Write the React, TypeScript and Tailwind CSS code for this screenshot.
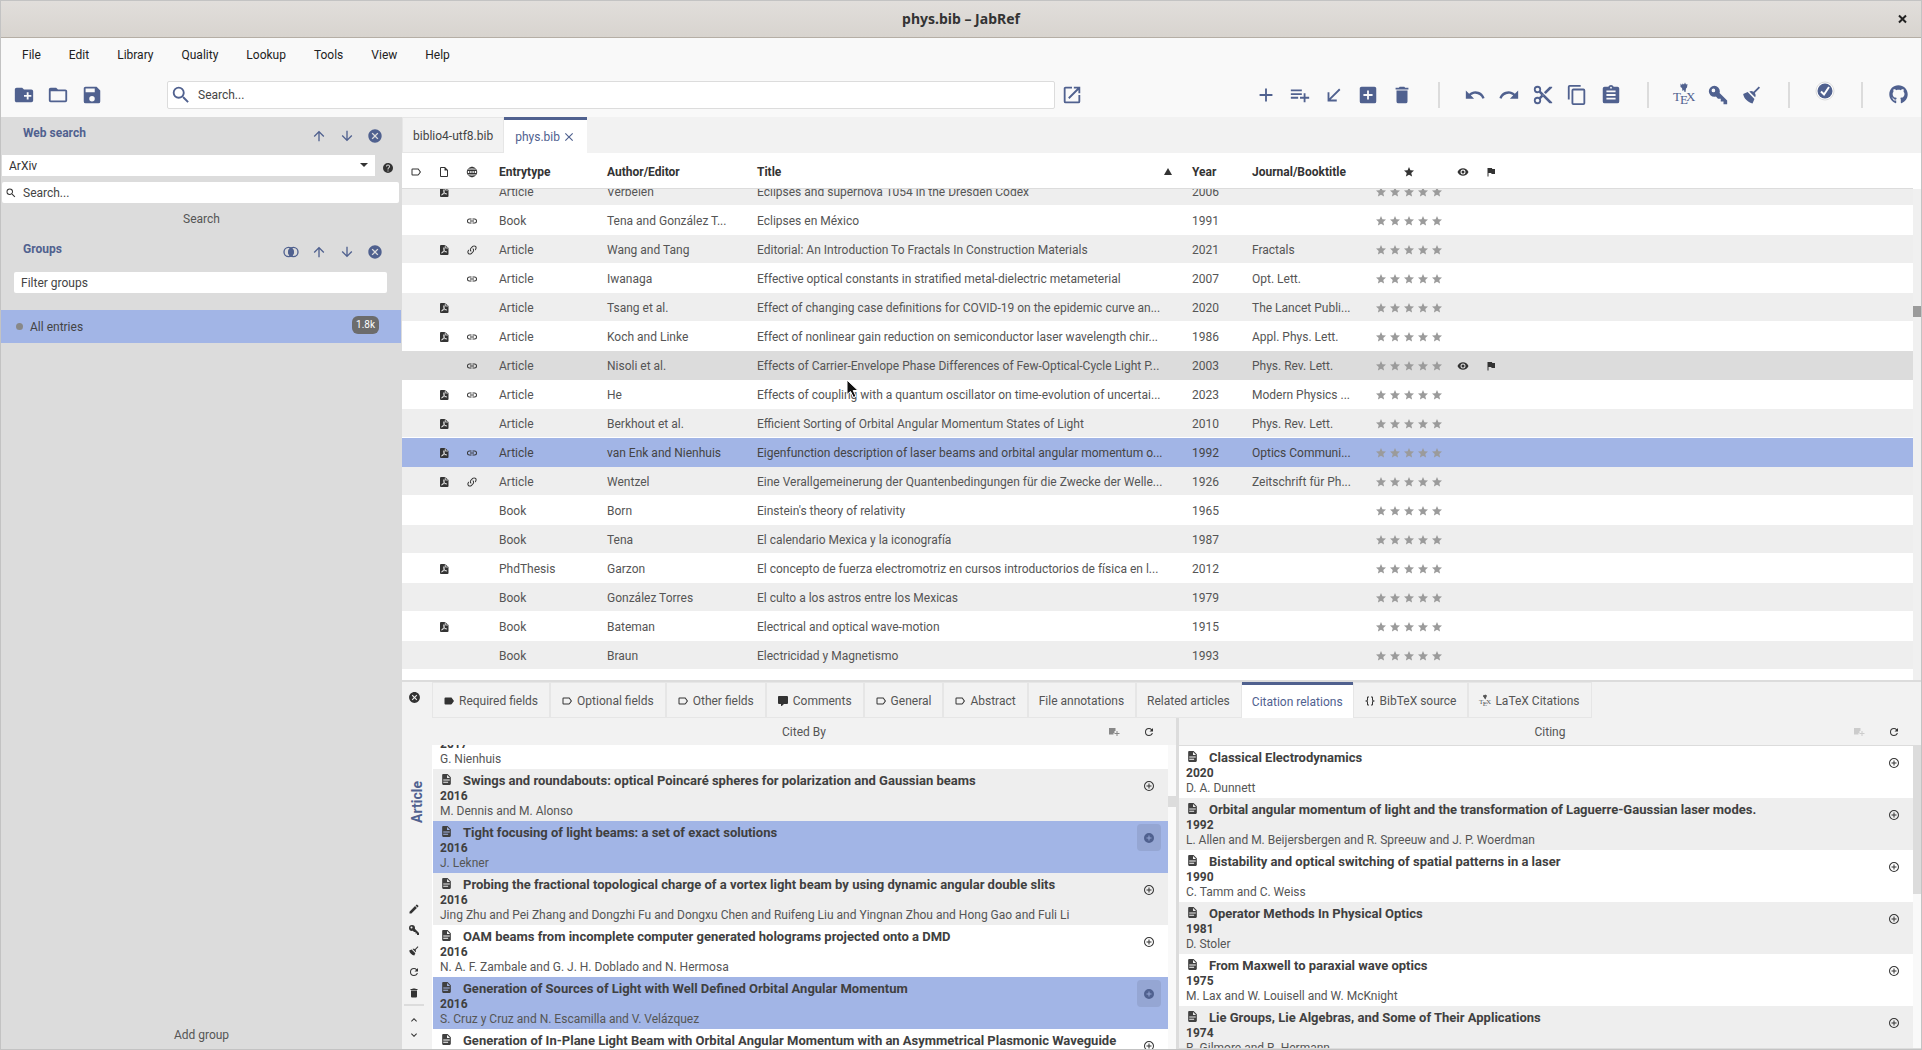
import React, { useEffect, useRef, useState } from 'react';
import clsx from 'clsx';
import { FaGithub } from 'react-icons/fa';

const ICONS = {
  folderPlus: 'M10,4L12,6H20A2,2 0 0,1 22,8V18A2,2 0 0,1 20,20H4C2.89,20 2,19.1 2,18V6C2,4.89 2.89,4 4,4H10M15,9V12H12V14H15V17H17V14H20V12H17V9H15Z',
  folder: 'M20,18H4V8H20M20,6H12L10,4H4C2.89,4 2,4.89 2,6V18A2,2 0 0,0 4,20H20A2,2 0 0,0 22,18V8C22,6.89 21.1,6 20,6Z',
  save: 'M15,9H5V5H15M12,19A3,3 0 0,1 9,16A3,3 0 0,1 12,13A3,3 0 0,1 15,16A3,3 0 0,1 12,19M17,3H5C3.89,3 3,3.9 3,5V19A2,2 0 0,0 5,21H19A2,2 0 0,0 21,19V7L17,3Z',
  magnify: 'M9.5,3A6.5,6.5 0 0,1 16,9.5C16,11.11 15.41,12.59 14.44,13.73L14.71,14H15.5L20.5,19L19,20.5L14,15.5V14.71L13.73,14.44C12.59,15.41 11.11,16 9.5,16A6.5,6.5 0 0,1 3,9.5A6.5,6.5 0 0,1 9.5,3M9.5,5C7,5 5,7 5,9.5C5,12 7,14 9.5,14C12,14 14,12 14,9.5C14,7 12,5 9.5,5Z',
  openNew: 'M14,3V5H17.59L7.76,14.83L9.17,16.24L19,6.41V10H21V3M19,19H5V5H12V3H5C3.89,3 3,3.9 3,5V19A2,2 0 0,0 5,21H19A2,2 0 0,0 21,19V12H19V19Z',
  plus: 'M19,13H13V19H11V13H5V11H11V5H13V11H19V13Z',
  playlistPlus: 'M2,16H10V14H2M18,14V10H16V14H12V16H16V20H18V16H22V14M14,6H2V8H14M14,10H2V12H14V10Z',
  importArrow: 'M19,6.41L17.59,5L7,15.59V9H5V19H15V17H8.41L19,6.41Z',
  plusBox: 'M17,13H13V17H11V13H7V11H11V7H13V11H17M19,3H5C3.89,3 3,3.89 3,5V19A2,2 0 0,0 5,21H19A2,2 0 0,0 21,19V5C21,3.89 20.1,3 19,3Z',
  trash: 'M19,4H15.5L14.5,3H9.5L8.5,4H5V6H19M6,19A2,2 0 0,0 8,21H16A2,2 0 0,0 18,19V7H6V19Z',
  undo: 'M12.5,8C9.85,8 7.45,9 5.6,10.6L2,7V16H11L7.38,12.38C8.77,11.22 10.54,10.5 12.5,10.5C16.04,10.5 19.05,12.81 20.1,16L22.47,15.22C21.08,11.03 17.15,8 12.5,8Z',
  redo: 'M18.4,10.6C16.55,9 14.15,8 11.5,8C6.85,8 2.92,11.03 1.54,15.22L3.9,16C4.95,12.81 7.95,10.5 11.5,10.5C13.45,10.5 15.23,11.22 16.62,12.38L13,16H22V7L18.4,10.6Z',
  cut: 'M19,3L13,9L15,11L22,4V3M12,12.5A0.5,0.5 0 0,1 11.5,12A0.5,0.5 0 0,1 12,11.5A0.5,0.5 0 0,1 12.5,12A0.5,0.5 0 0,1 12,12.5M6,20A2,2 0 0,1 4,18C4,16.89 4.9,16 6,16A2,2 0 0,1 8,18C8,19.11 7.1,20 6,20M6,8A2,2 0 0,1 4,6C4,4.89 4.9,4 6,4A2,2 0 0,1 8,6C8,7.11 7.1,8 6,8M9.64,7.64C9.87,7.14 10,6.59 10,6A4,4 0 0,0 6,2A4,4 0 0,0 2,6A4,4 0 0,0 6,10C6.59,10 7.14,9.87 7.64,9.64L10,12L7.64,14.36C7.14,14.13 6.59,14 6,14A4,4 0 0,0 2,18A4,4 0 0,0 6,22A4,4 0 0,0 10,18C10,17.41 9.87,16.86 9.64,16.36L12,14L19,21H22V20L9.64,7.64Z',
  copy: 'M19,21H8V7H19M19,5H8A2,2 0 0,0 6,7V21A2,2 0 0,0 8,23H19A2,2 0 0,0 21,21V7A2,2 0 0,0 19,5M16,1H4A2,2 0 0,0 2,3V17H4V3H16V1Z',
  paste: 'M17,9H7V7H17M17,13H7V11H17M17,17H7V15H17M12,3A1,1 0 0,1 13,4A1,1 0 0,1 12,5A1,1 0 0,1 11,4A1,1 0 0,1 12,3M19,3H14.82C14.4,1.84 13.3,1 12,1C10.7,1 9.6,1.84 9.18,3H5A2,2 0 0,0 3,5V19A2,2 0 0,0 5,21H19A2,2 0 0,0 21,19V5A2,2 0 0,0 19,3Z',
  key: 'M22,18V22H18V19H15V16H12L9.74,13.74C9.19,13.91 8.61,14 8,14A6,6 0 0,1 2,8A6,6 0 0,1 8,2A6,6 0 0,1 14,8C14,8.61 13.91,9.19 13.74,9.74L22,18M7,5A2,2 0 0,0 5,7A2,2 0 0,0 7,9A2,2 0 0,0 9,7A2,2 0 0,0 7,5Z',
  broom: 'M19.36,2.72L20.78,4.14L15.06,9.85C16.13,11.39 16.28,13.24 15.38,14.44L9.06,8.12C10.26,7.22 12.11,7.37 13.65,8.44L19.36,2.72M5.93,17.57C3.92,15.56 2.69,13.16 2.35,10.92L7.23,8.83L14.67,16.27L12.58,21.15C10.34,20.81 7.94,19.58 5.93,17.57Z',
  arrowUp: 'M13,20H11V8L5.5,13.5L4.08,12.08L12,4.16L19.92,12.08L18.5,13.5L13,8V20Z',
  arrowDown: 'M11,4H13V16L18.5,10.5L19.92,11.92L12,19.84L4.08,11.92L5.5,10.5L11,16V4Z',
  closeCircle: 'M12,2C17.53,2 22,6.47 22,12C22,17.53 17.53,22 12,22C6.47,22 2,17.53 2,12C2,6.47 6.47,2 12,2M15.59,7L12,10.59L8.41,7L7,8.41L10.59,12L7,15.59L8.41,17L12,13.41L15.59,17L17,15.59L13.41,12L17,8.41L15.59,7Z',
  close: 'M19,6.41L17.59,5L12,10.59L6.41,5L5,6.41L10.59,12L5,17.59L6.41,19L12,13.41L17.59,19L19,17.59L13.41,12L19,6.41Z',
  help: 'M15.07,11.25L14.17,12.17C13.45,12.89 13,13.5 13,15H11V14.5C11,13.39 11.45,12.39 12.17,11.67L13.41,10.41C13.78,10.05 14,9.55 14,9C14,7.89 13.1,7 12,7A2,2 0 0,0 10,9H8A4,4 0 0,1 12,5A4,4 0 0,1 16,9C16,9.88 15.64,10.67 15.07,11.25M13,19H11V17H13M12,2A10,10 0 0,0 2,12A10,10 0 0,0 12,22A10,10 0 0,0 22,12C22,6.47 17.5,2 12,2Z',
  link: 'M3.9,12C3.9,10.29 5.29,8.9 7,8.9H11V7H7A5,5 0 0,0 2,12A5,5 0 0,0 7,17H11V15.1H7C5.29,15.1 3.9,13.71 3.9,12M8,13H16V11H8V13M17,7H13V8.9H17C18.71,8.9 20.1,10.29 20.1,12C20.1,13.71 18.71,15.1 17,15.1H13V17H17A5,5 0 0,0 22,12A5,5 0 0,0 17,7Z',
  linkVariant: 'M10.59,13.41C11,13.8 11,14.44 10.59,14.83C10.2,15.22 9.56,15.22 9.17,14.83C7.22,12.88 7.22,9.71 9.17,7.76V7.76L12.71,4.22C14.66,2.27 17.83,2.27 19.78,4.22C21.73,6.17 21.73,9.34 19.78,11.29L18.29,12.78C18.3,11.96 18.17,11.14 17.89,10.36L18.36,9.88C19.54,8.71 19.54,6.81 18.36,5.64C17.19,4.46 15.29,4.46 14.12,5.64L10.59,9.17C9.41,10.34 9.41,12.24 10.59,13.41M13.41,9.17C13.8,8.78 14.44,8.78 14.83,9.17C16.78,11.12 16.78,14.29 14.83,16.24V16.24L11.29,19.78C9.34,21.73 6.17,21.73 4.22,19.78C2.27,17.83 2.27,14.66 4.22,12.71L5.71,11.22C5.7,12.04 5.83,12.86 6.11,13.65L5.64,14.12C4.46,15.29 4.46,17.19 5.64,18.36C6.81,19.54 8.71,19.54 9.88,18.36L13.41,14.83C14.59,13.66 14.59,11.76 13.41,10.59C13,10.2 13,9.56 13.41,9.17Z',
  labelOutline: 'M16,17H5V7H16L19.55,12M17.63,5.84C17.27,5.33 16.67,5 16,5H5A2,2 0 0,0 3,7V17A2,2 0 0,0 5,19H16C16.67,19 17.27,18.66 17.63,18.15L22,12L17.63,5.84Z',
  label: 'M17.63,5.84C17.27,5.33 16.67,5 16,5H5A2,2 0 0,0 3,7V17A2,2 0 0,0 5,19H16C16.67,19 17.27,18.66 17.63,18.15L22,12L17.63,5.84Z',
  file: 'M14,2H6A2,2 0 0,0 4,4V20A2,2 0 0,0 6,22H18A2,2 0 0,0 20,20V8L14,2M18,20H6V4H13V9H18V20Z',
  fileText: 'M13,9H18.5L13,3.5V9M6,2H14L20,8V20A2,2 0 0,1 18,22H6C4.89,22 4,21.1 4,20V4C4,2.89 4.89,2 6,2M15,18V16H6V18H15M18,14V12H6V14H18Z',
  star: 'M12,17.27L18.18,21L16.54,13.97L22,9.24L14.81,8.62L12,2L9.19,8.62L2,9.24L7.45,13.97L5.82,21L12,17.27Z',
  eye: 'M12,9A3,3 0 0,1 15,12A3,3 0 0,1 12,15A3,3 0 0,1 9,12A3,3 0 0,1 12,9M12,4.5C17,4.5 21.27,7.61 23,12C21.27,16.39 17,19.5 12,19.5C7,19.5 2.73,16.39 1,12C2.73,7.61 7,4.5 12,4.5M12,7A5,5 0 0,0 7,12A5,5 0 0,0 12,17A5,5 0 0,0 17,12A5,5 0 0,0 12,7Z',
  flag: 'M14.4,6L14,4H5V21H7V14H12.6L13,16H20V6H14.4Z',
  pencil: 'M20.71,7.04C21.1,6.65 21.1,6 20.71,5.63L18.37,3.29C18,2.9 17.35,2.9 16.96,3.29L15.12,5.12L18.87,8.87M3,17.25V21H6.75L17.81,9.93L14.06,6.18L3,17.25Z',
  refresh: 'M17.65,6.35C16.2,4.9 14.21,4 12,4A8,8 0 0,0 4,12A8,8 0 0,0 12,20C15.73,20 18.84,17.45 19.73,14H17.65C16.83,16.33 14.61,18 12,18A6,6 0 0,1 6,12A6,6 0 0,1 12,6C13.66,6 15.14,6.69 16.22,7.78L13,11H20V4L17.65,6.35Z',
  comment: 'M9,22A1,1 0 0,1 8,21V18H4A2,2 0 0,1 2,16V4C2,2.89 2.9,2 4,2H20A2,2 0 0,1 22,4V16A2,2 0 0,1 20,18H13.9L10.2,21.71C10,21.9 9.75,22 9.5,22H9Z',
  chevronUp: 'M7.41,15.41L12,10.83L16.59,15.41L18,14L12,8L6,14L7.41,15.41Z',
  chevronDown: 'M7.41,8.58L12,13.17L16.59,8.58L18,10L12,16L6,10L7.41,8.58Z',
  braces: 'M8,3A2,2 0 0,0 6,5V9A2,2 0 0,1 4,11H3V13H4A2,2 0 0,1 6,15V19A2,2 0 0,0 8,21H10V19H8V14A2,2 0 0,0 6,12A2,2 0 0,0 8,10V5H10V3M16,3A2,2 0 0,1 18,5V9A2,2 0 0,0 20,11H21V13H20A2,2 0 0,0 18,15V19A2,2 0 0,1 16,21H14V19H16V14A2,2 0 0,1 18,12A2,2 0 0,1 16,10V5H14V3H16Z',
  plusCircleOutline: 'M12,20C7.59,20 4,16.41 4,12C4,7.59 7.59,4 12,4C16.41,4 20,7.59 20,12C20,16.41 16.41,20 12,20M12,2A10,10 0 0,0 2,12A10,10 0 0,0 12,22A10,10 0 0,0 22,12A10,10 0 0,0 12,2M13,7H11V11H7V13H11V17H13V13H17V11H13V7Z',
  plusCircle: 'M17,13H13V17H11V13H7V11H11V7H13V11H17M12,2A10,10 0 0,0 2,12A10,10 0 0,0 12,22A10,10 0 0,0 22,12A10,10 0 0,0 12,2Z',
  addSelected: 'M2,4H15V10H13V14H11V17H2V4M17,10H19V14H23V16H19V20H17V16H13V14H17V10Z',
};

type IconName = keyof typeof ICONS;

function Icon({ name, size = 12, className }: { name: IconName; size?: number; className?: string }) {
  return (
    <svg width={size} height={size} viewBox="0 0 24 24" fill="currentColor" fillRule="evenodd" className={clsx('shrink-0', className)} aria-hidden="true">
      <path d={ICONS[name]} />
    </svg>
  );
}

function PdfIcon() {
  return (
    <svg width="12" height="12" viewBox="0 0 24 24" className="inline-block align-middle" aria-hidden="true">
      <path fill="currentColor" d="M6,2H14L21,8V20A2,2 0 0,1 19,22H6A2,2 0 0,1 4,20V4A2,2 0 0,1 6,2Z" />
      <path fill="none" stroke="#eee" strokeWidth="1.6" d="M11.5,7.5C13.5,7 12.5,11 11,14C9.5,17 7.5,19 7,18C6.5,16.5 12,14.5 17,15.5C19,16.5 14,16.5 11.5,10.5C11,9 11,8 11.5,7.5M14.5,3V8H20" />
    </svg>
  );
}

function GlobeIcon() {
  return (
    <svg width="12" height="12" viewBox="0 0 24 24" fill="none" stroke="currentColor" strokeWidth="2" className="inline-block" aria-hidden="true">
      <circle cx="12" cy="12" r="9.5" />
      <ellipse cx="12" cy="12" rx="4.5" ry="9.5" />
      <path d="M12,2V22M3,9H21M3,15H21" />
    </svg>
  );
}

function TexIcon({ size = 22 }: { size?: number }) {
  return (
    <svg width={size} height={size} viewBox="0 0 22 22" fill="currentColor" className="shrink-0 overflow-visible" aria-hidden="true">
      <path d="M7.5,-0.5L9,1L9.5,-0.5L11,0.5L12,-1.5L13,0.5L14.5,0L14,3.5L13,4.5L12.5,8H11.5L11,6L9.5,7L9,4L7.5,3Z" />
      <g fontFamily="Liberation Serif, serif" fontSize="13">
        <text x="0" y="17">T</text>
        <text x="7" y="20">E</text>
        <text x="13" y="17">X</text>
      </g>
    </svg>
  );
}

// Two overlapping rings, the shared part is filled
function UnionIcon() {
  return (
    <svg width="16" height="16" viewBox="0 0 24 24" fill="none" stroke="currentColor" strokeWidth="2" aria-hidden="true">
      <circle cx="8.5" cy="12" r="7" />
      <circle cx="15.5" cy="12" r="7" />
      <path fill="currentColor" d="M12,6A7,7 0 0,1 12,18A7,7 0 0,1 12,6Z" />
    </svg>
  );
}

function CheckBadge() {
  return (
    <svg width="20" height="20" viewBox="0 0 20 20" aria-hidden="true">
      <circle cx="10" cy="10" r="9" fill="#fff" stroke="#dcdcdc" />
      <circle cx="10" cy="10" r="7.5" fill="#50618f" />
      <path d="M6,10.5L9,13.5L14,6" fill="none" stroke="#fff" strokeWidth="2" />
    </svg>
  );
}

function ToolButton({ icon, label }: { icon: IconName; label: string }) {
  return (
    <button aria-label={label} className="flex h-7 w-[34px] items-center justify-center">
      <Icon name={icon} size={22} />
    </button>
  );
}

const Divider = () => (
  <div className="flex w-[39px] justify-center">
    <div className="h-[26px] w-0.5 bg-[#dcdcdc]" />
  </div>
);

const MENU = ['File', 'Edit', 'Library', 'Quality', 'Lookup', 'Tools', 'View', 'Help'];

type Entry = { pdf?: boolean; link?: 'link' | 'linkVariant'; type: string; author: string; title: string; year: string; journal?: string; marked?: boolean };

const ENTRIES: Entry[] = [
  { pdf: true, type: 'Article', author: 'Verbelen', title: 'Eclipses and supernova 1054 in the Dresden Codex', year: '2006' },
  { link: 'link', type: 'Book', author: 'Tena and González T...', title: 'Eclipses en México', year: '1991' },
  { pdf: true, link: 'linkVariant', type: 'Article', author: 'Wang and Tang', title: 'Editorial: An Introduction To Fractals In Construction Materials', year: '2021', journal: 'Fractals' },
  { link: 'link', type: 'Article', author: 'Iwanaga', title: 'Effective optical constants in stratified metal-dielectric metameterial', year: '2007', journal: 'Opt. Lett.' },
  { pdf: true, type: 'Article', author: 'Tsang et al.', title: 'Effect of changing case definitions for COVID-19 on the epidemic curve an...', year: '2020', journal: 'The Lancet Publi...' },
  { pdf: true, link: 'link', type: 'Article', author: 'Koch and Linke', title: 'Effect of nonlinear gain reduction on semiconductor laser wavelength chir...', year: '1986', journal: 'Appl. Phys. Lett.' },
  { link: 'link', type: 'Article', author: 'Nisoli et al.', title: 'Effects of Carrier-Envelope Phase Differences of Few-Optical-Cycle Light P...', year: '2003', journal: 'Phys. Rev. Lett.', marked: true },
  { pdf: true, link: 'link', type: 'Article', author: 'He', title: 'Effects of coupling with a quantum oscillator on time-evolution of uncertai...', year: '2023', journal: 'Modern Physics ...' },
  { pdf: true, type: 'Article', author: 'Berkhout et al.', title: 'Efficient Sorting of Orbital Angular Momentum States of Light', year: '2010', journal: 'Phys. Rev. Lett.' },
  { pdf: true, link: 'link', type: 'Article', author: 'van Enk and Nienhuis', title: 'Eigenfunction description of laser beams and orbital angular momentum o...', year: '1992', journal: 'Optics Communi...' },
  { pdf: true, link: 'linkVariant', type: 'Article', author: 'Wentzel', title: 'Eine Verallgemeinerung der Quantenbedingungen für die Zwecke der Welle...', year: '1926', journal: 'Zeitschrift für Ph...' },
  { type: 'Book', author: 'Born', title: "Einstein's theory of relativity", year: '1965' },
  { type: 'Book', author: 'Tena', title: 'El calendario Mexica y la iconografía', year: '1987' },
  { pdf: true, type: 'PhdThesis', author: 'Garzon', title: 'El concepto de fuerza electromotriz en cursos introductorios de física en l...', year: '2012' },
  { type: 'Book', author: 'González Torres', title: 'El culto a los astros entre los Mexicas', year: '1979' },
  { pdf: true, type: 'Book', author: 'Bateman', title: 'Electrical and optical wave-motion', year: '1915' },
  { type: 'Book', author: 'Braun', title: 'Electricidad y Magnetismo', year: '1993' },
  { type: '', author: '', title: '', year: '' },
];

type Relation = { title: string; year: string; authors: string };

const CITED_BY: Relation[] = [
  { title: '', year: '2017', authors: 'G. Nienhuis' },
  { title: 'Swings and roundabouts: optical Poincaré spheres for polarization and Gaussian beams', year: '2016', authors: 'M. Dennis and M. Alonso' },
  { title: 'Tight focusing of light beams: a set of exact solutions', year: '2016', authors: 'J. Lekner' },
  { title: 'Probing the fractional topological charge of a vortex light beam by using dynamic angular double slits', year: '2016', authors: 'Jing Zhu and Pei Zhang and Dongzhi Fu and Dongxu Chen and Ruifeng Liu and Yingnan Zhou and Hong Gao and Fuli Li' },
  { title: 'OAM beams from incomplete computer generated holograms projected onto a DMD', year: '2016', authors: 'N. A. F. Zambale and G. J. H. Doblado and N. Hermosa' },
  { title: 'Generation of Sources of Light with Well Defined Orbital Angular Momentum', year: '2016', authors: 'S. Cruz y Cruz and N. Escamilla and V. Velázquez' },
  { title: 'Generation of In-Plane Light Beam with Orbital Angular Momentum with an Asymmetrical Plasmonic Waveguide', year: '', authors: '' },
];

const CITING: Relation[] = [
  { title: 'Classical Electrodynamics', year: '2020', authors: 'D. A. Dunnett' },
  { title: 'Orbital angular momentum of light and the transformation of Laguerre-Gaussian laser modes.', year: '1992', authors: 'L. Allen and M. Beijersbergen and R. Spreeuw and J. P. Woerdman' },
  { title: 'Bistability and optical switching of spatial patterns in a laser', year: '1990', authors: 'C. Tamm and C. Weiss' },
  { title: 'Operator Methods In Physical Optics', year: '1981', authors: 'D. Stoler' },
  { title: 'From Maxwell to paraxial wave optics', year: '1975', authors: 'M. Lax and W. Louisell and W. McKnight' },
  { title: 'Lie Groups, Lie Algebras, and Some of Their Applications', year: '1974', authors: 'R. Gilmore and R. Hermann' },
];

const EDITOR_TABS: { name: string; icon?: IconName | 'tex' }[] = [
  { name: 'Required fields', icon: 'label' },
  { name: 'Optional fields', icon: 'labelOutline' },
  { name: 'Other fields', icon: 'labelOutline' },
  { name: 'Comments', icon: 'comment' },
  { name: 'General', icon: 'labelOutline' },
  { name: 'Abstract', icon: 'labelOutline' },
  { name: 'File annotations' },
  { name: 'Related articles' },
  { name: 'Citation relations' },
  { name: 'BibTeX source', icon: 'braces' },
  { name: 'LaTeX Citations', icon: 'tex' },
];

// Scroll area that opens at a given position
function Scroller({ top = 0, children }: { top?: number; children: React.ReactNode }) {
  const ref = useRef<HTMLDivElement>(null);
  useEffect(() => {
    if (ref.current) ref.current.scrollTop = top;
  }, [top]);
  return (
    <div ref={ref} className="min-w-0 flex-1 overflow-hidden">
      {children}
    </div>
  );
}

function PaneHeader({ title, union, className }: { title: string; union?: boolean; className?: string }) {
  return (
    <div className={clsx('flex items-start justify-between pr-[19px] pl-[22px]', className)}>
      <h2 className="text-xs font-bold text-[#50618f]">{title}</h2>
      <div className="flex gap-3 pt-[3px] text-[#50618f]">
        {union && <button aria-label="Toggle intersection"><UnionIcon /></button>}
        <button aria-label="Move up"><Icon name="arrowUp" size={16} /></button>
        <button aria-label="Move down"><Icon name="arrowDown" size={16} /></button>
        <button aria-label={`Close ${title}`}><Icon name="closeCircle" size={16} /></button>
      </div>
    </div>
  );
}

function Sidebar() {
  return (
    <aside className="flex w-[401px] shrink-0 flex-col bg-[#dcdcdc]">
      <PaneHeader title="Web search" className="pt-2" />
      <div className="mt-[11px] flex h-[21px] items-center pl-px">
        <div className="relative w-[373px]">
          <select aria-label="Search provider" className="block h-[21px] w-full appearance-none bg-white px-[7px] text-xs text-[#333]">
            <option>ArXiv</option>
          </select>
          <svg width="8" height="4" viewBox="0 0 8 4" className="absolute top-2 right-[7px]" aria-hidden="true">
            <path d="M0,0H8L4,4Z" fill="#333" />
          </svg>
        </div>
        <button aria-label="Help" className="mt-1 ml-[7px] text-[#333]"><Icon name="help" /></button>
      </div>
      <label className="mx-px mt-1.5 mr-[3px] flex h-[21px] items-center gap-1.5 rounded-xs bg-white pl-[3px] text-[#333]">
        <Icon name="magnify" />
        <input aria-label="Web search query" placeholder="Search..." className="min-w-0 flex-1 text-xs outline-none placeholder:text-[#444]" />
      </label>
      <button className="mt-0.5 h-7 text-xs text-[#555]">Search</button>
      <PaneHeader title="Groups" union className="pt-2" />
      <input aria-label="Filter groups" placeholder="Filter groups" className="mr-[15px] ml-[13px] mt-3 h-[21px] rounded-xs bg-white px-[7px] text-xs outline-none placeholder:text-[#444]" />
      <ul className="mt-[17px] flex-1">
        <li className="mr-px flex h-[33px] items-center bg-[#a2b5e6] pl-[15px] text-xs text-[#444]">
          <span className="h-[7px] w-[7px] rounded-full bg-[#888]" />
          <span className="ml-[7px] flex-1">All entries</span>
          <span className="mr-[22px] mb-1 rounded-md bg-[#6c6c6c] px-1 py-0.5 text-[10px] leading-[14px] text-white">1.8k</span>
        </li>
      </ul>
      <button className="h-7 text-xs text-[#555]">Add group</button>
    </aside>
  );
}

function EntryTable() {
  const [selected] = useState(9);
  return (
    <div className="flex min-h-0 flex-[527] basis-0 bg-white">
      <Scroller top={12}>
        <table className="w-full table-fixed border-separate border-spacing-0 text-left text-xs text-[#555]">
          <colgroup>
            <col className="w-7" />
            <col className="w-7" />
            <col className="w-7" />
            <col className="w-[108px]" />
            <col className="w-[150px]" />
            <col className="w-[435px]" />
            <col className="w-[60px]" />
            <col className="w-[133px]" />
            <col className="w-[77px]" />
            <col className="w-7" />
            <col className="w-7" />
            <col />
          </colgroup>
          <thead className="sticky top-0 z-10 bg-white text-[#333]">
            <tr className="h-9 *:border-b *:border-[#dcdcdc] *:pt-0.5">
              <th className="text-center"><Icon name="labelOutline" className="inline-block" /></th>
              <th className="text-center"><Icon name="file" className="inline-block" /></th>
              <th className="text-center"><GlobeIcon /></th>
              <th className="px-[13px]">Entrytype</th>
              <th className="px-[13px]">Author/Editor</th>
              <th className="pr-[7px] pl-[13px]">
                <div className="flex items-center justify-between">
                  Title
                  <svg width="8" height="7" viewBox="0 0 8 7" aria-hidden="true"><path d="M4,0L8,7H0Z" fill="currentColor" /></svg>
                </div>
              </th>
              <th className="px-[13px]">Year</th>
              <th className="px-[13px]">Journal/Booktitle</th>
              <th className="pr-1 text-center"><Icon name="star" className="inline-block" /></th>
              <th className="text-center"><Icon name="eye" className="inline-block" /></th>
              <th className="text-center"><Icon name="flag" className="inline-block" /></th>
              <th></th>
            </tr>
          </thead>
          <tbody>
            {ENTRIES.map((e, i) => (
              <tr
                key={i}
                className={clsx(
                  'h-[29px] *:whitespace-nowrap *:overflow-hidden',
                  i === selected && 'bg-[#a2b5e6] text-[#444]',
                  i !== selected && e.marked && 'bg-[#dcdcdc]',
                  i !== selected && !e.marked && i % 2 === 0 && 'bg-[#eee] *:shadow-[inset_0_-1px_#fff]',
                )}
              >
                <td></td>
                <td className="text-center leading-3 text-[#333]">{e.pdf && <PdfIcon />}</td>
                <td className="text-center leading-3 text-[#333]">{e.link && <Icon name={e.link} className="inline-block" />}</td>
                <td className="px-[13px]">{e.type}</td>
                <td className="px-[13px]">{e.author}</td>
                <td className="px-[13px]">{e.title}</td>
                <td className="px-[13px]">{e.year}</td>
                <td className="px-[13px]">{e.journal}</td>
                <td>
                  <div className="flex gap-0.5 pl-[3px] text-[#9b9b9b]">
                    {[1, 2, 3, 4, 5].map((n) => <Icon key={n} name="star" />)}
                  </div>
                </td>
                <td className="text-center leading-3 text-[#333]">{e.marked && <Icon name="eye" className="inline-block" />}</td>
                <td className="text-center leading-3 text-[#333]">{e.marked && <Icon name="flag" className="inline-block" />}</td>
                <td></td>
              </tr>
            ))}
          </tbody>
        </table>
      </Scroller>
      <div className="mt-9 w-2 bg-[#f0f0f0] pt-[117px]">
        <div className="h-[11px] bg-[#9b9b9b]" />
      </div>
    </div>
  );
}

function RelationRow({ item, shaded, selected }: { item: Relation; shaded?: boolean; selected?: boolean }) {
  return (
    <li className={clsx('flex h-[52px] items-start pl-[7px]', selected ? 'bg-[#a2b5e6]' : shaded && 'bg-[#eee]')}>
      <div className="min-w-0 flex-1 pt-1 text-xs leading-[15px] whitespace-nowrap text-[#555]">
        <div className="flex h-4 text-[13px] leading-[15px] font-bold text-[#404040]">
          <Icon name="fileText" size={13} />
          <span className="ml-2.5">{item.title}</span>
        </div>
        <div className="h-[15px] font-bold text-[#404040]">{item.year}</div>
        <div className="h-[15px]">{item.authors}</div>
      </div>
      <button
        aria-label={`Add ${item.title}`}
        className={clsx('mt-[3px] mr-[7px] flex h-[27px] w-6 items-center justify-center rounded', selected ? 'bg-[#95a6d3] text-[#50618f]' : 'text-[#333]')}
      >
        <Icon name={selected ? 'plusCircle' : 'plusCircleOutline'} />
      </button>
    </li>
  );
}

function RelationHeader({ title, disabled }: { title: string; disabled?: boolean }) {
  return (
    <div className="grid h-[27px] shrink-0 grid-cols-[1fr_auto_1fr] items-center text-xs text-[#555]">
      <span />
      <h3>{title}</h3>
      <div className="flex justify-end gap-[23px] pr-[21px]">
        <button aria-label={`Import selected of ${title}`} disabled={disabled} className={disabled ? 'text-[#ccc]' : 'text-[#888]'}>
          <Icon name="addSelected" />
        </button>
        <button aria-label={`Reload ${title}`} className="text-[#333]"><Icon name="refresh" /></button>
      </div>
    </div>
  );
}

function EntryEditor() {
  const [tab, setTab] = useState('Citation relations');
  return (
    <section className="flex min-h-0 flex-[367] basis-0 bg-[#f2f2f2] text-[#333]">
      <div className="flex w-[30px] shrink-0 flex-col items-center pt-[9px] pr-1.5 pb-2">
        <button aria-label="Close editor"><Icon name="closeCircle" size={13} /></button>
        <div className="flex flex-1 items-start pt-[77px] pl-1.5">
          <span className="rotate-180 text-sm font-bold text-[#50618f] [writing-mode:vertical-rl]">Article</span>
        </div>
        <div className="flex flex-col items-center gap-[9px]">
          <button aria-label="Change entry type"><Icon name="pencil" /></button>
          <button aria-label="Generate citation key"><Icon name="key" /></button>
          <button aria-label="Clean up entry"><Icon name="broom" /></button>
          <button aria-label="Fetch data"><Icon name="refresh" /></button>
          <button aria-label="Delete entry"><Icon name="trash" /></button>
        </div>
        <div className="mt-[5px] h-0.5 w-5 bg-[#dcdcdc]" />
        <button aria-label="Previous entry" className="mt-2"><Icon name="chevronUp" /></button>
        <button aria-label="Next entry" className="mt-[3px]"><Icon name="chevronDown" /></button>
      </div>
      <div className="flex min-w-0 flex-1 flex-col">
        <div role="tablist" className="flex h-9 shrink-0">
          {EDITOR_TABS.map((t) => (
            <button
              key={t.name}
              role="tab"
              aria-selected={tab === t.name}
              onClick={() => setTab(t.name)}
              className={clsx(
                'flex items-center gap-1 text-xs whitespace-nowrap',
                tab === t.name ? 'border-t-3 border-[#50618f] bg-white px-2.5 text-[#50618f]' : 'border border-[#e6e6e6] pt-0.5 pr-[11px] pl-2.5 text-[#555]',
              )}
            >
              {t.icon === 'tex' ? <TexIcon size={12} /> : t.icon && <Icon name={t.icon} className="text-[#333]" />}
              {t.name}
            </button>
          ))}
        </div>
        <div className="flex min-h-0 flex-1">
          <div className="flex min-w-0 flex-[744] basis-0 flex-col">
            <RelationHeader title="Cited By" />
            <div className="flex min-h-0 flex-1 bg-white">
              <Scroller top={28}>
                <ul className="pl-px">
                  {CITED_BY.map((r, i) => <RelationRow key={i} item={r} shaded={i % 2 === 1} selected={i === 2 || i === 5} />)}
                </ul>
              </Scroller>
              <div className="w-2 bg-[#f9f9f9] pt-[51px]">
                <div className="h-[11px] bg-[#dcdcdc]" />
              </div>
            </div>
          </div>
          <div className="w-[3px] bg-[#dcdcdc]" />
          <div className="flex min-w-0 flex-[742] basis-0 flex-col">
            <RelationHeader title="Citing" disabled />
            <div className="flex min-h-0 flex-1 border-y border-[#dcdcdc] bg-white">
              <Scroller>
                <ul>
                  {CITING.map((r, i) => <RelationRow key={i} item={r} shaded={i % 2 === 1} />)}
                </ul>
              </Scroller>
              <div className="w-2 bg-[#f9f9f9]">
                <div className="h-[148px] bg-[#dcdcdc]" />
              </div>
            </div>
          </div>
        </div>
      </div>
    </section>
  );
}

export default function App() {
  return (
    <div className="relative flex h-screen flex-col border border-[#c3c3c3] bg-[#f9f9f9] font-[family-name:Roboto,sans-serif]">
      <header className="grid h-[37px] shrink-0 grid-cols-[1fr_auto_1fr] items-center border-b border-[#b5aea5] bg-linear-to-b from-[#e1dedb] to-[#d8d4cf]">
        <span />
        <h1 className="font-[family-name:'Noto_Sans',sans-serif] text-sm font-bold text-[#333]">phys.bib – JabRef</h1>
        <button aria-label="Close window" className="mr-[14px] justify-self-end text-[#222]">
          <svg width="9" height="10" viewBox="0 0 9 10" aria-hidden="true"><path d="M1,1.5L8,8.5M8,1.5L1,8.5" stroke="currentColor" strokeWidth="2" /></svg>
        </button>
      </header>

      <nav className="flex h-[34px] shrink-0 items-center gap-7 pl-[21px] text-xs text-[#222]">
        {MENU.map((m) => <button key={m}>{m}</button>)}
      </nav>

      <div className="flex h-[45px] shrink-0 items-center px-1.5 text-[#50618f]">
        <ToolButton icon="folderPlus" label="New library" />
        <ToolButton icon="folder" label="Open library" />
        <ToolButton icon="save" label="Save library" />
        <label className="ml-[58px] flex h-7 flex-1 items-center gap-1.5 rounded-xs border border-[#dcdcdc] bg-white pl-0.5">
          <Icon name="magnify" size={22} />
          <input aria-label="Search library" placeholder="Search..." className="min-w-0 flex-1 text-xs outline-none placeholder:text-[#444]" />
        </label>
        <ToolButton icon="openNew" label="Open search window" />
        <div className="w-[160px]" />
        <ToolButton icon="plus" label="New entry" />
        <ToolButton icon="playlistPlus" label="New entry from text" />
        <ToolButton icon="importArrow" label="Import entry" />
        <ToolButton icon="plusBox" label="New article" />
        <ToolButton icon="trash" label="Delete entry" />
        <Divider />
        <ToolButton icon="undo" label="Undo" />
        <ToolButton icon="redo" label="Redo" />
        <ToolButton icon="cut" label="Cut" />
        <ToolButton icon="copy" label="Copy" />
        <ToolButton icon="paste" label="Paste" />
        <Divider />
        <button aria-label="Push to TeX editor" className="flex w-[34px] justify-center"><TexIcon /></button>
        <ToolButton icon="key" label="Generate citation keys" />
        <ToolButton icon="broom" label="Clean up entries" />
        <Divider />
        <button aria-label="Status" className="mb-2 flex w-[34px] justify-center"><CheckBadge /></button>
        <Divider />
        <a href="#github" aria-label="GitHub" className="flex w-[34px] justify-center"><FaGithub size={19} /></a>
      </div>

      <div className="flex min-h-0 flex-1">
        <Sidebar />
        <main className="flex min-w-0 flex-1 flex-col">
          <div role="tablist" className="flex h-9 shrink-0 bg-[#f2f2f2] text-xs">
            <button role="tab" aria-selected="false" className="border border-[#e6e6e6] px-2.5 pt-0.5 text-[#444]">biblio4-utf8.bib</button>
            <button role="tab" aria-selected="true" className="flex items-center gap-0.5 border-t-3 border-[#50618f] bg-white px-[11px] text-[#50618f]">
              phys.bib
              <Icon name="close" size={14} />
            </button>
          </div>
          <EntryTable />
          <div className="h-0.5 shrink-0 bg-[#dcdcdc]" />
          <EntryEditor />
        </main>
      </div>

      {/* mouse pointer over the table */}
      <svg width="14" height="20" viewBox="0 0 14 20" className="absolute top-[378px] left-[845px] z-20" aria-hidden="true">
        <path d="M1,1V15.5L4.5,12.5L7.5,18.5L10,17.3L7.2,11.5H12Z" fill="#111" stroke="#fff" />
      </svg>
    </div>
  );
}
